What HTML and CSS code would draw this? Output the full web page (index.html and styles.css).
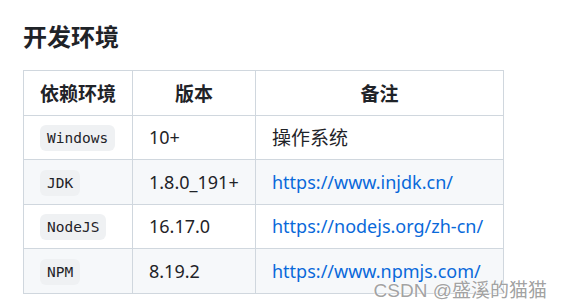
FILE: index.html
```html
<!DOCTYPE html>
<html lang="zh-CN">
<head>
<meta charset="utf-8">
<title>开发环境</title>
<link rel="stylesheet" href="styles.css">
</head>
<body>
<div class="page">
  <h2 class="title">开发环境</h2>
  <table class="env">
    <colgroup>
      <col class="c1"><col class="c2"><col class="c3">
    </colgroup>
    <thead>
      <tr><th>依赖环境</th><th>版本</th><th>备注</th></tr>
    </thead>
    <tbody>
      <tr><td><code>Windows</code></td><td>10+</td><td class="cjk">操作系统</td></tr>
      <tr><td><code>JDK</code></td><td>1.8.0_191+</td><td><a href="#">https://www.injdk.cn/</a></td></tr>
      <tr><td><code>NodeJS</code></td><td>16.17.0</td><td><a href="#">https://nodejs.org/zh-cn/</a></td></tr>
      <tr><td><code>NPM</code></td><td>8.19.2</td><td><a href="#">https://www.npmjs.com/</a></td></tr>
    </tbody>
  </table>
  <div class="watermark">CSDN @盛溪的猫猫</div>
</div>
</body>
</html>
```

FILE: styles.css
```css
html, body {
  margin: 0;
  padding: 0;
  background: #ffffff;
}
body {
  font-family: "Noto Sans", "Noto Sans CJK SC", sans-serif;
  color: #1f2328;
  font-size: 18px;
}
.page {
  position: relative;
  width: 563px;
  height: 308px;
  padding-left: 23px;
  box-sizing: border-box;
  overflow: hidden;
}
.title {
  margin: 0;
  padding-top: 21px;
  height: 70px;
  box-sizing: border-box;
  font-size: 24px;
  line-height: 30px;
  font-weight: 700;
  font-family: "Noto Sans CJK SC", sans-serif;
}
.env {
  border-collapse: collapse;
  table-layout: fixed;
  width: 480px;
}
.c1 { width: 109px; }
.c2 { width: 123px; }
.c3 { width: 248px; }
.env th, .env td {
  border: 1px solid #d0d7de;
  height: 44.5px;
  padding: 0 16px;
  box-sizing: border-box;
  line-height: 26px;
  white-space: nowrap;
}
.env th {
  font-family: "Noto Sans CJK SC", sans-serif;
  font-size: 19px;
  font-weight: 700;
  text-align: center;
}
.env td.cjk {
  font-family: "Noto Sans CJK SC", sans-serif;
  font-size: 19px;
}
.env tbody tr:nth-child(2n) {
  background: #f6f8fa;
}
code {
  display: inline-block;
  font-family: "DejaVu Sans Mono", "Liberation Mono", monospace;
  font-size: 14.5px;
  line-height: 20px;
  padding: 3px 7px;
  background: #eff1f3;
  border-radius: 6px;
  vertical-align: middle;
}
a {
  color: #0969da;
  text-decoration: none;
}
.watermark {
  position: absolute;
  right: 16px;
  bottom: 6px;
  font-family: "Liberation Sans", "Noto Sans CJK SC", sans-serif;
  font-size: 19px;
  line-height: 22px;
  color: rgba(150, 150, 150, 0.9);
  text-shadow: 0 0 2px #ffffff, 0 0 1px #ffffff;
}
```
